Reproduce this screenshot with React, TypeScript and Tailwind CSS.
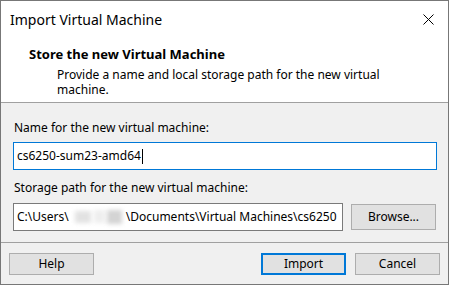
import React from "react";

const font = { fontFamily: '"Noto Sans", "Liberation Sans", Arial, sans-serif' };

function Button({ label, primary }: { label: string; primary?: boolean }) {
  return (
    <button
      className={
        "h-[22px] w-[85px] bg-[#e1e1e1] text-[12px] text-black leading-none " +
        (primary ? "border-2 border-[#0078d7]" : "border border-[#adadad]")
      }
    >
      {label}
    </button>
  );
}

export default function App() {
  return (
    <div className="h-[285px] w-[450px] bg-white" style={font}>
      <div className="flex h-[285px] w-[449px] flex-col border border-[#777777] bg-[#f0f0f0]">
        {/* header */}
        <div className="h-[102px] shrink-0 border-b border-[#a0a0a0] bg-white">
          <div className="flex h-[37px] items-center justify-between pl-[9px] pr-[14px]">
            <span className="text-[14px] text-black">Import Virtual Machine</span>
            <svg width="11" height="11" viewBox="0 0 11 11">
              <path d="M0.5 0.5 L10.5 10.5 M10.5 0.5 L0.5 10.5" stroke="#000" strokeWidth="1" />
            </svg>
          </div>
          <div className="mt-[9px] pl-[28px] text-[13px] leading-[15px] font-bold text-black">
            Store the new Virtual Machine
          </div>
          <div className="mt-[5px] w-[392px] pl-[56px] text-[12px] leading-[15px] text-black">
            Provide a name and local storage path for the new virtual machine.
          </div>
        </div>

        {/* body */}
        <div className="flex flex-1 flex-col px-[12px] pt-[17px]">
          <div className="pl-[1px] text-[12px] leading-[15px] text-black">
            Name for the new virtual machine:
          </div>
          <div className="mt-[7px] flex h-[28px] w-[424px] items-center border border-[#0078d7] bg-white pl-[3px] text-[12px] text-black">
            cs6250-sum23-amd64
            <span className="ml-[1px] inline-block h-[15px] w-[1px] bg-black" />
          </div>
          <div className="mt-[10px] pl-[1px] text-[12px] leading-[15px] text-black">
            Storage path for the new virtual machine:
          </div>
          <div className="mt-[8px] flex gap-[8px]">
            <div className="flex h-[28px] w-[330px] items-center overflow-hidden whitespace-nowrap border border-[#7a7a7a] bg-white pl-[3px] text-[12px] text-black">
              C:\Users\
              <span className="relative inline-block h-[16px] w-[57px]">
                <span className="absolute left-[6px] top-[2px] h-[12px] w-[16px] bg-[#e2e2e2] blur-[2px]" />
                <span className="absolute left-[25px] top-[1px] h-[13px] w-[11px] bg-[#eeeeee] blur-[2px]" />
                <span className="absolute left-[38px] top-[1px] h-[14px] w-[15px] bg-[#d4d4d4] blur-[2px]" />
              </span>
              \Documents\Virtual Machines\cs6250
            </div>
            <button className="mt-[1px] h-[26px] w-[85px] border border-[#adadad] bg-[#e1e1e1] text-[12px] text-black">
              Browse...
            </button>
          </div>
          <div className="flex-1" />
        </div>

        {/* footer */}
        <div className="flex h-[42px] shrink-0 items-start justify-between border-t border-[#a0a0a0] px-[8px] pt-[10px]">
          <Button label="Help" />
          <div className="flex gap-[9px]">
            <Button label="Import" primary />
            <Button label="Cancel" />
          </div>
        </div>
      </div>
    </div>
  );
}
